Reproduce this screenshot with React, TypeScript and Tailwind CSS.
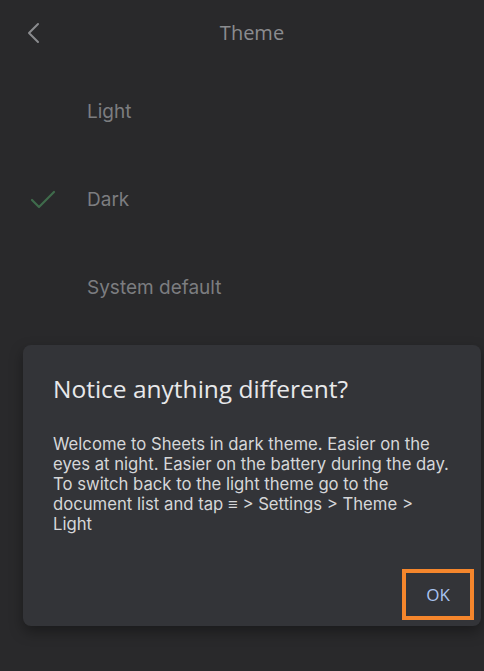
import React from 'react';

const items = [
  { label: 'Light', checked: false },
  { label: 'Dark', checked: true },
  { label: 'System default', checked: false },
];

export default function App() {
  return (
    <div className="relative w-[484px] h-[671px] overflow-hidden bg-[#29292b] font-['Inter',sans-serif]">
      {/* header */}
      <div className="flex h-[66px] items-center pl-[24px] pr-[24px]">
        <button className="text-[#8a8b8e]">
          <svg width="20" height="24" viewBox="0 0 20 24" fill="none" stroke="currentColor" strokeWidth="2" strokeLinecap="round" strokeLinejoin="round">
            <path d="M14 3 L5 12 L14 21" />
          </svg>
        </button>
        <h1 className="flex-1 text-center text-[20px] text-[#8b8c8f] font-['Open_Sans',sans-serif]">Theme</h1>
      </div>

      {/* options */}
      <ul className="mt-[2px]">
        {items.map((it) => (
          <li key={it.label} className="flex h-[88px] items-center">
            <div className="flex w-[87px] justify-center pr-[2px]">
              {it.checked && (
                <svg width="26" height="20" viewBox="0 0 26 20" fill="none" stroke="#3f6b4c" strokeWidth="2.2" strokeLinecap="round" strokeLinejoin="round">
                  <path d="M2 10 L9 17 L24 2" />
                </svg>
              )}
            </div>
            <span className="text-[19px] text-[#7c7d80]">{it.label}</span>
          </li>
        ))}
      </ul>

      {/* dialog */}
      <div className="absolute left-[23px] right-[3px] top-[345px] flex h-[281px] flex-col rounded-[8px] bg-[#333438] px-[30px] pt-[29px] pb-[6px] shadow-[0_6px_14px_rgba(0,0,0,0.35)]">
        <h2 className="text-[24.5px] leading-[30px] text-[#e8e8ea] font-['Open_Sans',sans-serif]">Notice anything different?</h2>
        <p className="mt-[30px] text-[16.7px] leading-[20px] text-[#d6d7d9]">
          Welcome to Sheets in dark theme. Easier on the eyes at night. Easier on the battery during the day. To switch back to the light theme go to the document list and tap ≡ &gt; Settings &gt; Theme &gt; Light
        </p>
        <div className="mt-auto flex justify-end">
          <button className="-mr-[23px] flex h-[51px] w-[72px] items-center justify-center border-4 border-[#f5862c] text-[17px] font-medium text-[#a9c3f0] font-['Open_Sans',sans-serif]">
            OK
          </button>
        </div>
      </div>
    </div>
  );
}
